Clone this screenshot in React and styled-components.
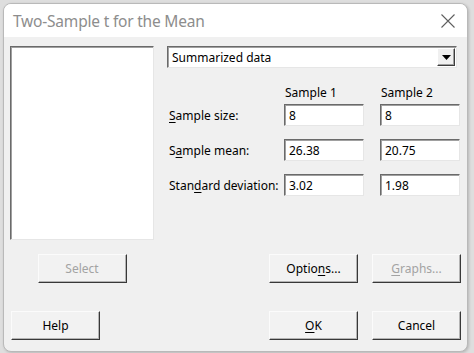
import React from "react";
import styled, { createGlobalStyle } from "styled-components";

const GlobalStyle = createGlobalStyle`
  html, body {
    margin: 0;
    padding: 0;
    background: #dedede;
  }
  body {
    font-family: "Noto Sans", "Open Sans", sans-serif;
    font-size: 12px;
    color: #000;
  }
`;

const Backdrop = styled.div`
  width: 474px;
  height: 353px;
  padding: 3px 6px 3px 3px;
  box-sizing: border-box;
`;

const Window = styled.div`
  height: 100%;
  display: flex;
  flex-direction: column;
  background: #f0f0f0;
  border: 1px solid #b9b9b9;
  border-radius: 8px;
  overflow: hidden;
  box-shadow: 1px 1px 3px rgba(0, 0, 0, 0.18);
`;

const TitleBar = styled.div`
  height: 33px;
  flex: none;
  display: flex;
  align-items: center;
  justify-content: space-between;
  background: #fff;
  padding: 0 11px 0 9px;
`;

const Title = styled.span`
  font-size: 15.5px;
  color: #8d8d8d;
  letter-spacing: -0.2px;
`;

const Close = styled.svg`
  width: 16px;
  height: 16px;
`;

const Body = styled.div`
  flex: 1;
  display: grid;
  grid-template-columns: 144px 1fr;
  column-gap: 13px;
  grid-template-rows: 194px 43px 57px;
  padding: 9px 5px 0 6px;
`;

const Sunken = styled.div`
  background: #fff;
  box-sizing: border-box;
  border-style: solid;
  border-width: 1px;
  border-color: #6a6a6a #e6e6e6 #e6e6e6 #6a6a6a;
  box-shadow: inset 1px 1px 0 #a0a0a0;
`;

const ListBox = styled(Sunken)``;

const RightPanel = styled.div`
  display: flex;
  flex-direction: column;
`;

const DropDown = styled(Sunken)`
  width: 290px;
  height: 22px;
  display: flex;
  align-items: center;
  justify-content: space-between;
  padding: 0 1px 0 4px;
`;

const ArrowButton = styled.div`
  width: 18px;
  height: 18px;
  box-sizing: border-box;
  display: flex;
  align-items: center;
  justify-content: center;
  background: #f0f0f0;
  border-style: solid;
  border-width: 1px;
  border-color: #fff #3c3c3c #3c3c3c #fff;
  box-shadow: inset -1px -1px 0 #a0a0a0;
`;

const Grid = styled.div`
  display: grid;
  grid-template-columns: 115px 96px 80px;
  grid-auto-rows: ${(p) => p.$row}px;
  row-gap: 13px;
  align-items: center;
  margin-top: ${(p) => p.$top}px;
  padding-left: 2px;
`;

const Head = styled.div`
  padding-left: 1px;
  line-height: 16px;
`;

const Label = styled.label`
  white-space: nowrap;
`;

const Field = styled(Sunken)`
  width: 80px;
  height: 22px;
  display: flex;
  align-items: center;
  padding-left: 4px;
`;

const Cell = styled.div`
  display: flex;
  justify-content: ${(p) => p.$justify || "flex-start"};
  align-items: flex-end;
  gap: 14px;
  padding-left: ${(p) => p.$left || 0}px;
  padding-top: ${(p) => p.$top || 0}px;
`;

const Button = styled.div`
  width: 89px;
  height: 29px;
  box-sizing: border-box;
  display: flex;
  align-items: center;
  justify-content: center;
  background: #f2f2f2;
  color: ${(p) => (p.$disabled ? "#a3a3a3" : "#000")};
  border-style: solid;
  border-width: 1px;
  border-color: #fbfbfb #383838 #383838 #fbfbfb;
  box-shadow: inset -1px -1px 0 #b4b4b4;
`;

const U = styled.span`
  text-decoration: underline;
  text-underline-offset: 2px;
`;

export default function App() {
  return (
    <>
      <GlobalStyle />
      <Backdrop>
        <Window>
          <TitleBar>
            <Title>Two-Sample t for the Mean</Title>
            <Close viewBox="0 0 16 16">
              <path d="M1.5 1.5 L14.5 14.5 M14.5 1.5 L1.5 14.5" stroke="#5f5f5f" strokeWidth="1.1" fill="none" />
            </Close>
          </TitleBar>
          <Body>
            <ListBox />
            <RightPanel>
              <DropDown>
                <span>Summarized data</span>
                <ArrowButton>
                  <svg width="9" height="5" viewBox="0 0 9 5">
                    <path d="M0 0 H9 L4.5 5 Z" fill="#000" />
                  </svg>
                </ArrowButton>
              </DropDown>
              <Grid $top={17} $row={16}>
                <span />
                <Head>Sample 1</Head>
                <Head>Sample 2</Head>
              </Grid>
              <Grid $top={3} $row={22}>
                <Label>
                  <U>S</U>ample size:
                </Label>
                <Field>8</Field>
                <Field>8</Field>
                <Label>
                  S<U>a</U>mple mean:
                </Label>
                <Field>26.38</Field>
                <Field>20.75</Field>
                <Label>
                  Stan<U>d</U>ard deviation:
                </Label>
                <Field>3.02</Field>
                <Field>1.98</Field>
              </Grid>
            </RightPanel>
            <Cell $justify="center" $top={14}>
              <Button $disabled>Select</Button>
            </Cell>
            <Cell $left={102} $top={14}>
              <Button>
                Optio<U>n</U>s...
              </Button>
              <Button $disabled>
                <U>G</U>raphs...
              </Button>
            </Cell>
            <Cell $left={1} $top={28}>
              <Button>Help</Button>
            </Cell>
            <Cell $left={102} $top={28}>
              <Button>
                <U>O</U>K
              </Button>
              <Button>Cancel</Button>
            </Cell>
          </Body>
        </Window>
      </Backdrop>
    </>
  );
}
